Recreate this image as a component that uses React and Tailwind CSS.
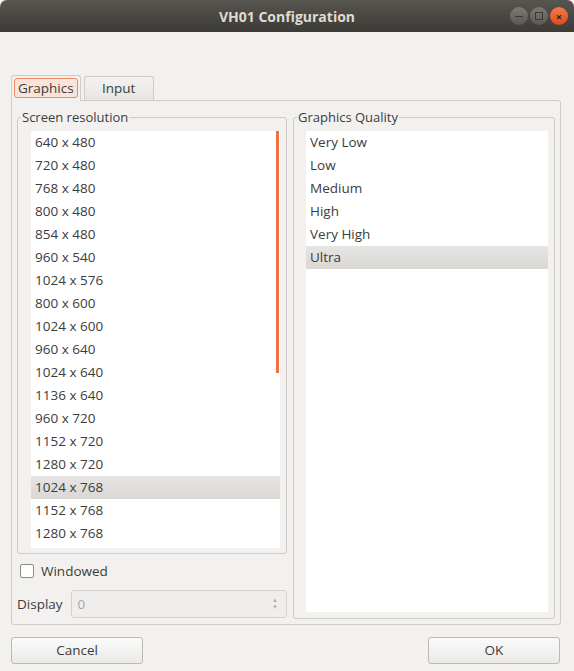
const resolutions = [
  "640 x 480", "720 x 480", "768 x 480", "800 x 480", "854 x 480", "960 x 540",
  "1024 x 576", "800 x 600", "1024 x 600", "960 x 640", "1024 x 640", "1136 x 640",
  "960 x 720", "1152 x 720", "1280 x 720", "1024 x 768", "1152 x 768", "1280 x 768",
];
const qualities = ["Very Low", "Low", "Medium", "High", "Very High", "Ultra"];

function ListRow({ label, selected }) {
  return (
    <div
      className={`flex h-[23px] items-center px-1 ${
        selected ? "bg-gradient-to-b from-[#e6e5e3] to-[#d9d8d5]" : ""
      }`}
    >
      {label}
    </div>
  );
}

function Group({ title, className, children }) {
  return (
    <div className={`relative rounded-[3px] border border-[#cfccc8] ${className}`}>
      <span className="absolute -top-[10px] left-[3px] bg-[#f2f1f0] px-[1px] text-[13px] leading-[18px] text-[#3c3c3c]">
        {title}
      </span>
      {children}
    </div>
  );
}

export default function App() {
  return (
    <div
      className="flex h-[671px] w-[574px] flex-col overflow-hidden bg-[#f2f1f0] text-[13.5px] text-[#3c3c3c]"
      style={{ fontFamily: '"Open Sans", "Noto Sans", sans-serif' }}
    >
      {/* Title bar */}
      <div className="relative flex h-[32px] shrink-0 items-center justify-center rounded-t-[7px] bg-gradient-to-b from-[#57554f] to-[#3c3b37]">
        <span className="text-[14px] font-bold text-[#dfdbd2]">VH01 Configuration</span>
        <div className="absolute right-[6px] top-[7px] flex gap-[2px]">
          <span className="flex h-[18px] w-[18px] items-center justify-center rounded-full bg-gradient-to-b from-[#7c7a75] to-[#5a5954]">
            <span className="h-[1px] w-[8px] bg-[#3a3935]" />
          </span>
          <span className="flex h-[18px] w-[18px] items-center justify-center rounded-full bg-gradient-to-b from-[#7c7a75] to-[#5a5954]">
            <span className="h-[8px] w-[8px] border border-[#3a3935]" />
          </span>
          <span className="flex h-[18px] w-[18px] items-center justify-center rounded-full bg-gradient-to-b from-[#f27a4c] to-[#df4a16] text-[11px] font-bold leading-none text-[#3a2017]">
            ×
          </span>
        </div>
      </div>

      <div className="flex flex-1 flex-col pl-[11px] pr-[13px] pt-[43px]">
        {/* Tabs */}
        <div className="flex items-end gap-[3px]">
          <div className="relative z-10 -mb-[1px] flex h-[26px] items-start rounded-t-[3px] border border-b-0 border-[#cfccc8] bg-[#f2f1f0] px-[2px] pt-[2px]">
            <span className="flex h-[20px] items-center rounded-[3px] border border-[#f08a63] bg-[#fbe3d8] px-[3px]">
              Graphics
            </span>
          </div>
          <div className="flex h-[24px] w-[70px] items-center justify-center rounded-t-[3px] border border-b-0 border-[#cfccc8] bg-gradient-to-b from-[#f4f3f2] to-[#e6e5e3]">
            Input
          </div>
        </div>

        {/* Tab pane */}
        <div className="flex h-[525px] gap-[6px] rounded-b-[3px] rounded-tr-[3px] border border-[#cfccc8] px-[5px] pt-[16px]">
          <div className="flex w-[270px] flex-col">
            <Group title="Screen resolution" className="h-[437px] pl-[13px] pr-[6px] pt-[13px]">
              <div className="relative h-[417px] overflow-hidden bg-white">
                {resolutions.map((r) => (
                  <ListRow key={r} label={r} selected={r === "1024 x 768"} />
                ))}
                <span className="absolute right-[1px] top-0 h-[242px] w-[3px] bg-[#ef7145]" />
              </div>
            </Group>
            <label className="ml-[3px] mt-[7px] flex items-center gap-[7px]">
              <span className="h-[14px] w-[14px] rounded-[2px] border border-[#8f8c86] bg-white" />
              Windowed
            </label>
            <div className="mt-[9px] flex items-center gap-[8px]">
              <span>Display</span>
              <div className="flex h-[28px] flex-1 items-center justify-between rounded-[3px] border border-[#d5d2ce] bg-[#efeeed] pl-[6px] pr-[8px] text-[#a8a6a2]">
                <span>0</span>
                <span className="flex flex-col text-[6px] leading-[7px] text-[#b3b1ad]">
                  <span>▲</span>
                  <span>▼</span>
                </span>
              </div>
            </div>
          </div>

          <Group title="Graphics Quality" className="h-[502px] flex-1 pl-[12px] pr-[6px] pt-[13px]">
            <div className="h-[481px] bg-white">
              {qualities.map((q) => (
                <ListRow key={q} label={q} selected={q === "Ultra"} />
              ))}
            </div>
          </Group>
        </div>

        {/* Buttons */}
        <div className="mt-[12px] flex justify-between pr-[1px]">
          <button className="h-[27px] w-[132px] rounded-[3px] border border-[#bdb9b4] bg-gradient-to-b from-[#fafafa] to-[#ebeae8] text-[#3c3c3c]">
            Cancel
          </button>
          <button className="h-[27px] w-[132px] rounded-[3px] border border-[#bdb9b4] bg-gradient-to-b from-[#fafafa] to-[#ebeae8] text-[#3c3c3c]">
            OK
          </button>
        </div>
      </div>
    </div>
  );
}
